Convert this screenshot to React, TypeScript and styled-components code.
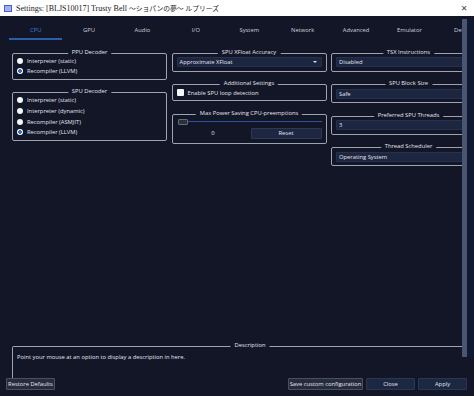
import React from "react";
import styled, { createGlobalStyle } from "styled-components";

const BG = "#131627";

const Global = createGlobalStyle`
  html, body { margin: 0; padding: 0; background: ${BG}; }
  body { width: 474px; height: 396px; overflow: hidden; }
  * { box-sizing: border-box; }
`;

const Window = styled.div`
  width: 474px;
  height: 396px;
  display: flex;
  flex-direction: column;
  background: ${BG};
  font-family: "Open Sans", "Noto Sans", sans-serif;
  font-size: 5.8px;
  color: #e2e5ec;
  overflow: hidden;
`;

const TitleBar = styled.div`
  height: 16px;
  flex: none;
  background: #ffffff;
  display: flex;
  align-items: center;
  padding-left: 4px;
  color: #1a1a1a;
  font-family: "Liberation Serif", "Noto Sans CJK JP", serif;
  font-size: 8px;
`;

const AppIcon = styled.div`
  width: 8px;
  height: 7px;
  border: 1px solid #4b5fc9;
  background: #9fb0ee;
  margin-right: 4px;
  flex: none;
`;

const TitleText = styled.span`
  flex: 1;
  white-space: nowrap;
`;

const Jp = styled.span`
  font-size: 6.8px;
`;

const CloseX = styled.span`
  width: 20px;
  text-align: center;
  font-family: "DejaVu Sans", sans-serif;
  font-size: 8px;
  color: #444;
`;

const Body = styled.div`
  flex: 1;
  display: flex;
  min-height: 0;
`;

const Main = styled.div`
  width: 462px;
  flex: none;
  overflow: hidden;
  display: flex;
  flex-direction: column;
`;

const Gutter = styled.div`
  width: 12px;
  padding-top: 3px;
  display: flex;
  align-items: flex-start;
`;

const Thumb = styled.div`
  width: 5px;
  height: 338px;
  background: #4a5572;
`;

const Track = styled.div`
  width: 7px;
  height: 338px;
  background: #0f1a32;
`;

const TabBar = styled.div`
  height: 24px;
  flex: none;
  display: flex;
  padding-left: 9px;
  white-space: nowrap;
`;

const Tab = styled.div<{ $active?: boolean }>`
  width: 53.4px;
  flex: none;
  display: flex;
  align-items: flex-end;
  justify-content: center;
  line-height: 8px;
  padding-bottom: 4px;
  color: ${(p) => (p.$active ? "#3b7bd6" : "#cdd1d9")};
  border-bottom: 2px solid ${(p) => (p.$active ? "#2b5ea8" : "transparent")};
`;

const Columns = styled.div`
  display: grid;
  grid-template-columns: repeat(3, 155px);
  column-gap: 4.5px;
  padding-left: 12px;
  align-items: start;
`;

const Column = styled.div`
  display: flex;
  flex-direction: column;
`;

const Box = styled.div`
  position: relative;
  margin-top: 12.5px;
  border: 1px solid #9ea3b0;
  border-radius: 2px;
`;

const Legend = styled.span`
  position: absolute;
  top: -6px;
  left: 50%;
  transform: translateX(-50%);
  padding: 0 4px;
  background: ${BG};
  line-height: 8px;
  white-space: nowrap;
  color: #e2e5ec;
`;

const RadioList = styled.div`
  padding: 2px 4px;
  display: flex;
  flex-direction: column;
`;

const OptionRow = styled.div<{ $h?: number }>`
  height: ${(p) => p.$h ?? 10.6}px;
  display: flex;
  align-items: center;
  gap: 4px;
  white-space: nowrap;
`;

const RadioDot = styled.span<{ $on?: boolean }>`
  width: 6px;
  height: 6px;
  border-radius: 50%;
  flex: none;
  background: ${(p) =>
    p.$on
      ? "radial-gradient(circle, #3570cf 0 1.6px, #ffffff 2px)"
      : "#f4f5f8"};
`;

const CheckSquare = styled.span`
  width: 7px;
  height: 7px;
  border-radius: 1px;
  background: #f4f5f8;
  flex: none;
`;

const Inner = styled.div`
  padding: 3.5px 4px;
`;

const Combo = styled.div`
  height: 10px;
  background: #1d2641;
  border: 1px solid #27314d;
  border-radius: 1px;
  display: flex;
  align-items: center;
  justify-content: space-between;
  padding: 0 4px 0 2px;
  white-space: nowrap;
`;

const Arrow = styled.span`
  width: 0;
  height: 0;
  border-left: 2px solid transparent;
  border-right: 2px solid transparent;
  border-top: 2.5px solid #dfe3ea;
`;

const SliderBox = styled.div`
  padding: 4px 4px 4px 5px;
  display: flex;
  flex-direction: column;
  gap: 3px;
`;

const SliderRow = styled.div`
  height: 6px;
  display: flex;
  align-items: center;
`;

const Handle = styled.span`
  width: 10px;
  height: 6px;
  border-radius: 1px;
  background: #2a2f3b;
  border: 1px solid #636a7a;
  flex: none;
`;

const Rail = styled.span`
  flex: 1;
  height: 1.5px;
  background: #27549a;
`;

const ValueRow = styled.div`
  display: grid;
  grid-template-columns: 1fr 1fr;
  gap: 2px;
  height: 11px;
`;

const ValueLabel = styled.div`
  display: flex;
  align-items: center;
  justify-content: center;
`;

const Button = styled.div<{ $w: number; $tone?: "grey" | "blue" }>`
  width: ${(p) => p.$w}px;
  height: 12px;
  flex: none;
  display: flex;
  align-items: center;
  justify-content: center;
  white-space: nowrap;
  border-radius: 1px;
  background: ${(p) => (p.$tone === "grey" ? "#262c3d" : "#1c2742")};
  border: 1px solid ${(p) => (p.$tone === "grey" ? "#4a5063" : "#2b3653")};
  color: #e4e7ee;
`;

const ResetButton = styled.div`
  display: flex;
  align-items: center;
  justify-content: center;
  background: #1d2741;
  border: 1px solid #2d3855;
  border-radius: 1px;
`;

const Spacer = styled.div`
  flex: 1;
`;

const DescBox = styled.div`
  position: relative;
  margin-left: 12px;
  width: 476px;
  height: 32px;
  flex: none;
  border: 1px solid #9ea3b0;
  border-bottom: none;
  border-radius: 2px 2px 0 0;
  padding: 6px 4px 0;
  white-space: nowrap;
`;

const Footer = styled.div`
  height: 18px;
  flex: none;
  display: flex;
  align-items: flex-start;
  padding: 0 7px 0 6px;
  gap: 3px;
`;

type GroupProps = { title: string; children: React.ReactNode };
const Group = ({ title, children }: GroupProps) => (
  <Box>
    <Legend>{title}</Legend>
    {children}
  </Box>
);

const tabs = ["CPU", "GPU", "Audio", "I/O", "System", "Network", "Advanced", "Emulator", "Debug"];

const ComboGroup = ({ title, value, arrow }: { title: string; value: string; arrow?: boolean }) => (
  <Group title={title}>
    <Inner>
      <Combo>
        <span>{value}</span>
        {arrow && <Arrow />}
      </Combo>
    </Inner>
  </Group>
);

export default function App() {
  return (
    <Window>
      <Global />
      <TitleBar>
        <AppIcon />
        <TitleText>
          Settings: [BLJS10017] Trusty Bell <Jp>～ショパンの夢～ ルプリーズ</Jp>
        </TitleText>
        <CloseX>✕</CloseX>
      </TitleBar>
      <Body>
        <Main>
          <TabBar>
            {tabs.map((t, i) => (
              <Tab key={t} $active={i === 0}>
                {t}
              </Tab>
            ))}
          </TabBar>
          <Columns>
            <Column>
              <Group title="PPU Decoder">
                <RadioList>
                  <OptionRow>
                    <RadioDot />
                    Interpreter (static)
                  </OptionRow>
                  <OptionRow>
                    <RadioDot $on />
                    Recompiler (LLVM)
                  </OptionRow>
                </RadioList>
              </Group>
              <Group title="SPU Decoder">
                <RadioList>
                  <OptionRow>
                    <RadioDot />
                    Interpreter (static)
                  </OptionRow>
                  <OptionRow>
                    <RadioDot />
                    Interpreter (dynamic)
                  </OptionRow>
                  <OptionRow>
                    <RadioDot />
                    Recompiler (ASMJIT)
                  </OptionRow>
                  <OptionRow>
                    <RadioDot $on />
                    Recompiler (LLVM)
                  </OptionRow>
                </RadioList>
              </Group>
            </Column>
            <Column>
              <ComboGroup title="SPU XFloat Accuracy" value="Approximate XFloat" arrow />
              <Group title="Additional Settings">
                <Inner>
                  <OptionRow $h={8}>
                    <CheckSquare />
                    Enable SPU loop detection
                  </OptionRow>
                </Inner>
              </Group>
              <Group title="Max Power Saving CPU-preemptions">
                <SliderBox>
                  <SliderRow>
                    <Handle />
                    <Rail />
                  </SliderRow>
                  <ValueRow>
                    <ValueLabel>0</ValueLabel>
                    <ResetButton>Reset</ResetButton>
                  </ValueRow>
                </SliderBox>
              </Group>
            </Column>
            <Column>
              <ComboGroup title="TSX Instructions" value="Disabled" />
              <ComboGroup title="SPU Block Size" value="Safe" />
              <ComboGroup title="Preferred SPU Threads" value="3" />
              <ComboGroup title="Thread Scheduler" value="Operating System" />
            </Column>
          </Columns>
          <Spacer />
          <DescBox>
            <Legend>Description</Legend>
            Point your mouse at an option to display a description in here.
          </DescBox>
        </Main>
        <Gutter>
          <Thumb />
          <Track />
        </Gutter>
      </Body>
      <Footer>
        <Button $w={49} $tone="grey">Restore Defaults</Button>
        <Spacer />
        <Button $w={75} $tone="grey">Save custom configuration</Button>
        <Button $w={49}>Close</Button>
        <Button $w={49}>Apply</Button>
      </Footer>
    </Window>
  );
}
